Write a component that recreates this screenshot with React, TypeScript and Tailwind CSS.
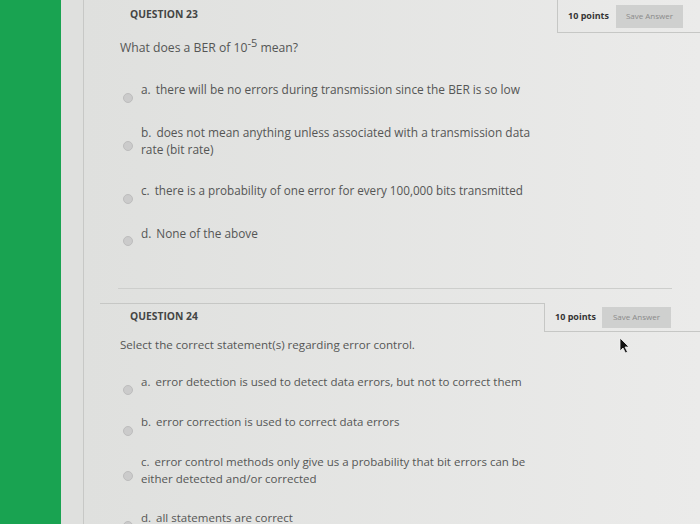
import React from "react";

function Radio({ mt }: { mt: string }) {
  return (
    <div
      className={`${mt} -mb-[40px] h-[10px] w-[10px] shrink-0 rounded-full border border-[#bdbdbd] bg-[#cbcbcb]`}
    />
  );
}

function Option({
  letter,
  lines,
  radioMt,
  mt,
  size,
}: {
  letter: string;
  lines: string[];
  radioMt: string;
  mt: string;
  size: string;
}) {
  return (
    <div className={`${mt} flex items-start pl-[39px]`}>
      <Radio mt={radioMt} />
      <div className={`ml-[8px] ${size} leading-[17px] text-[#555655]`}>
        {lines.map((l, i) => (
          <div key={i}>
            {i === 0 ? (
              <>
                <span className="mr-[5px]">{letter}</span>
                {l}
              </>
            ) : (
              l
            )}
          </div>
        ))}
      </div>
    </div>
  );
}

function PointsBox({
  w,
  h,
  btnW,
  btnH,
  gap,
}: {
  w: string;
  h: string;
  btnW: string;
  btnH: string;
  gap: string;
}) {
  return (
    <div
      className={`${w} ${h} flex shrink-0 items-center border-b border-l border-[#c6c7c5] pl-[10px]`}
    >
      <span className="text-[9px] font-bold text-[#353535]">10 points</span>
      <div
        className={`${btnW} ${btnH} ${gap} flex items-center justify-center bg-[#cfd0cf] text-[8px] text-[#8a8a8a]`}
      >
        Save Answer
      </div>
    </div>
  );
}

export default function App() {
  return (
    <div
      className="relative flex h-[524px] w-[700px] overflow-hidden"
      style={{ fontFamily: '"Open Sans", "Noto Sans", sans-serif' }}
    >
      <div className="w-[61px] shrink-0 bg-[#19a351]" />
      <div className="w-[23px] shrink-0 border-r border-[#c7c8c6] bg-[#dfe0de]" />
      <div className="flex flex-1 flex-col bg-linear-to-r from-[#dfe0de] to-[#ebebea]">
        {/* Question 23 */}
        <div className="flex h-[33px] shrink-0">
          <div className="flex-1 pl-[46px] pt-[6px] text-[10.3px] font-bold leading-[16px] text-[#444544]">
            QUESTION 23
          </div>
          <PointsBox w="w-[143px]" h="h-[33px]" btnW="w-[67px]" btnH="h-[23px]" gap="ml-[7px]" />
        </div>
        <div className="mt-[6px] pl-[36px] text-[12.2px] leading-[18px] text-[#555655]">
          What does a BER of 10
          <sup className="relative top-[-5px] align-baseline text-[11px]">-5</sup> mean?
        </div>
        <Option
          size="text-[11.9px]"
          mt="mt-[24px]"
          radioMt="mt-[12px]"
          letter="a."
          lines={["there will be no errors during transmission since the BER is so low"]}
        />
        <Option
          size="text-[11.9px]"
          mt="mt-[26px]"
          radioMt="mt-[17px]"
          letter="b."
          lines={["does not mean anything unless associated with a transmission data", "rate (bit rate)"]}
        />
        <Option
          size="text-[11.7px]"
          mt="mt-[24px]"
          radioMt="mt-[12px]"
          letter="c."
          lines={["there is a probability of one error for every 100,000 bits transmitted"]}
        />
        <Option
          size="text-[11.8px]"
          mt="mt-[26px]"
          radioMt="mt-[11px]"
          letter="d."
          lines={["None of the above"]}
        />
        <div className="ml-[34px] mr-[28px] mt-[46px] h-px shrink-0 bg-[#cdcecc]" />

        {/* Question 24 */}
        <div className="ml-[16px] mt-[14px] flex h-[29px] shrink-0">
          <div className="flex-1 border-t border-[#c6c7c5] pl-[30px] pt-[4px] text-[10.3px] font-bold leading-[16px] text-[#444544]">
            QUESTION 24
          </div>
          <PointsBox w="w-[156px]" h="h-[29px]" btnW="w-[69px]" btnH="h-[21px]" gap="ml-[6px]" />
        </div>
        <div className="mt-[4px] pl-[36px] text-[11.6px] leading-[18px] text-[#555655]">
          Select the correct statement(s) regarding error control.
        </div>
        <Option
          size="text-[11.5px]"
          mt="mt-[19px]"
          radioMt="mt-[12px]"
          letter="a."
          lines={["error detection is used to detect data errors, but not to correct them"]}
        />
        <Option
          size="text-[11.5px]"
          mt="mt-[23px]"
          radioMt="mt-[13px]"
          letter="b."
          lines={["error correction is used to correct data errors"]}
        />
        <Option
          size="text-[11.5px]"
          mt="mt-[23px]"
          radioMt="mt-[18px]"
          letter="c."
          lines={["error control methods only give us a probability that bit errors can be", "either detected and/or corrected"]}
        />
        <Option
          size="text-[11.5px]"
          mt="mt-[22px]"
          radioMt="mt-[12px]"
          letter="d."
          lines={["all statements are correct"]}
        />
      </div>

      {/* mouse cursor */}
      <svg
        className="absolute left-[619px] top-[337px]"
        width="11"
        height="17"
        viewBox="0 0 11 17"
      >
        <path
          d="M1 1 L1 14 L4 11 L6.5 16 L8.5 15 L6 10 L10 10 Z"
          fill="#111"
          stroke="#f2f2f2"
          strokeWidth="0.8"
        />
      </svg>
    </div>
  );
}
